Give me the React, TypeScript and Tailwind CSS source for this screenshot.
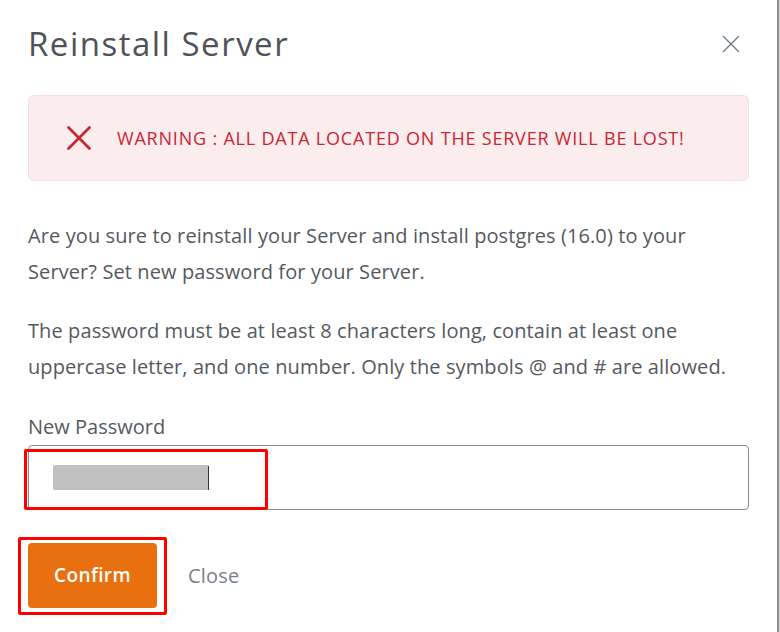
import React from "react";

const body = { fontFamily: "'Open Sans', Lato, sans-serif" };

function CrossIcon({ className }: { className?: string }) {
  return (
    <svg viewBox="0 0 24 24" className={className} fill="none" stroke="currentColor" strokeLinecap="round">
      <path d="M3 3L21 21M21 3L3 21" />
    </svg>
  );
}

export default function App() {
  return (
    <div className="flex h-[632px] w-[780px] overflow-hidden bg-white" style={body}>
      <div className="relative h-full w-[779px] border-r-2 border-[#8d8d8d] px-7 pt-6">
        <div className="flex items-center justify-between">
          <h1 className="text-[33px] leading-[40px] tracking-[1.5px] text-[#4f5357]">Reinstall Server</h1>
          <button className="mr-2 text-[#6f7a86]">
            <CrossIcon className="h-[20px] w-[20px] stroke-[1.6]" />
          </button>
        </div>

        <div className="mt-[31px] flex h-[86px] items-center rounded-md border border-[#f7dde0] bg-[#fbecee] pl-9">
          <CrossIcon className="h-[28px] w-[28px] stroke-[2.4] text-[#c42a31]" />
          <span className="ml-6 text-[18px] tracking-[0.8px] text-[#c62833]">
            WARNING : ALL DATA LOCATED ON THE SERVER WILL BE LOST!
          </span>
        </div>

        <p className="mt-[37px] text-[20px] leading-[36px] tracking-[0.1px] text-[#55595e]">
          Are you sure to reinstall your Server and install postgres (16.0) to your Server? Set new password for your Server.
        </p>
        <p className="mt-[23px] text-[20px] leading-[36px] tracking-[0.1px] text-[#55595e]">
          The password must be at least 8 characters long, contain at least one uppercase letter, and one number. Only the symbols @ and # are allowed.
        </p>

        <label className="mt-[28px] block text-[20px] leading-[28px] text-[#55595e]">New Password</label>
        <div className="relative mt-1 flex h-[65px] items-center rounded-[4px] border border-[#8a8a8a] pl-6">
          <div className="flex h-[25px] w-[156px] items-center justify-end rounded-[2px] bg-[#c0c0c0]">
            <div className="h-[24px] w-px bg-[#333]" />
          </div>
          <div className="pointer-events-none absolute left-[-5px] top-[3px] h-[61px] w-[244px] rounded-[2px] border-[3px] border-[#ff0000]" />
        </div>

        <div className="mt-[33px] flex items-center">
          <div className="relative">
            <button className="h-[65px] w-[129px] rounded-[4px] bg-[#e8700e] text-[19px] font-semibold tracking-[0.4px] text-white">
              Confirm
            </button>
            <div className="pointer-events-none absolute left-[-10px] top-[-6px] h-[78px] w-[149px] rounded-[2px] border-[3px] border-[#ff0000]" />
          </div>
          <button className="ml-[31px] text-[20px] tracking-[0.2px] text-[#7a8088]">Close</button>
        </div>
      </div>
      <div className="h-full w-px bg-[#dcdcdc]" />
    </div>
  );
}
